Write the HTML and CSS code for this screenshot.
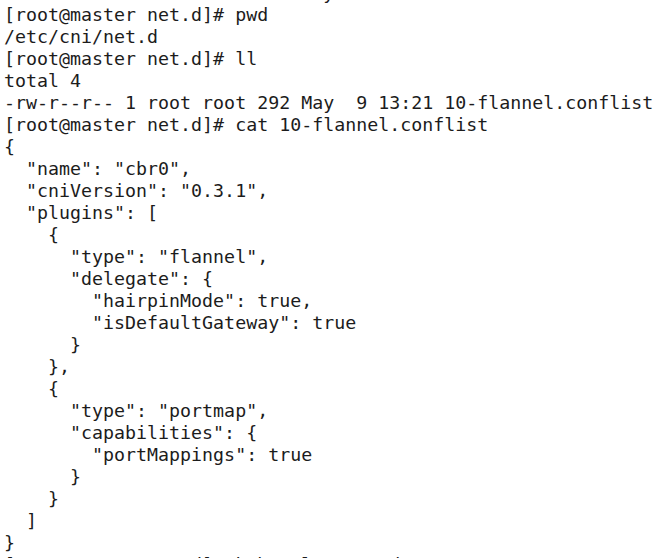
FILE: index.html
```html
<!DOCTYPE html>
<html>
<head>
<meta charset="utf-8">
<link rel="stylesheet" href="styles.css">
</head>
<body>
<pre class="term">                             y
[root@master net.d]# pwd
/etc/cni/net.d
[root@master net.d]# ll
total 4
-rw-r--r-- 1 root root 292 May  9 13:21 10-flannel.conflist
[root@master net.d]# cat 10-flannel.conflist
{
  "name": "cbr0",
  "cniVersion": "0.3.1",
  "plugins": [
    {
      "type": "flannel",
      "delegate": {
        "hairpinMode": true,
        "isDefaultGateway": true
      }
    },
    {
      "type": "portmap",
      "capabilities": {
        "portMappings": true
      }
    }
  ]
}
[root@master net.d]# kubectl get pods
</pre>
</body>
</html>
```
FILE: styles.css
```css
html, body {
  margin: 0;
  padding: 0;
  background: #ffffff;
  overflow: hidden;
}
.term {
  margin: -18px 0 0 0;
  padding: 0 0 0 4px;
  font-family: "DejaVu Sans Mono", monospace;
  font-size: 18.3px;
  line-height: 22px;
  color: #1c1c1c;
  white-space: pre;
}
```
